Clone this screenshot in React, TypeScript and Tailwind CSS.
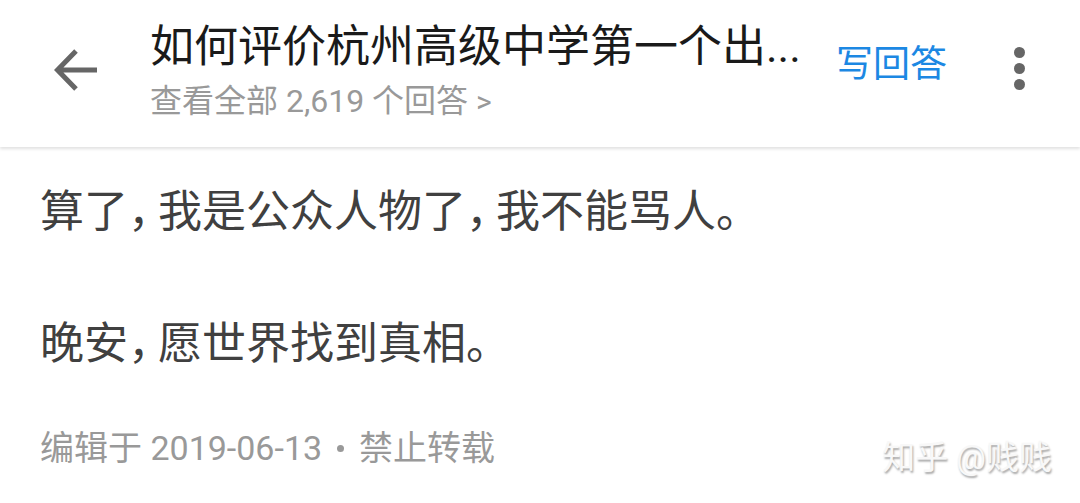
const cjk = "font-['Roboto','Noto_Sans_CJK_SC',sans-serif]";

function BackArrow() {
  return (
    <svg width="48" height="48" viewBox="0 0 48 48" fill="none">
      <path
        d="M44 24H5M23 5 4.5 24 23 43"
        stroke="#666"
        strokeWidth="5"
        strokeLinecap="butt"
        strokeLinejoin="miter"
      />
    </svg>
  );
}

// full-width comma with a narrower advance
function Comma() {
  return <span className="tracking-[-14px]">，</span>;
}

function MoreDots() {
  return (
    <div className="flex flex-col items-center gap-[5px]">
      <span className="h-[11px] w-[11px] rounded-full bg-[#666]" />
      <span className="h-[11px] w-[11px] rounded-full bg-[#666]" />
      <span className="h-[11px] w-[11px] rounded-full bg-[#666]" />
    </div>
  );
}

export default function App() {
  return (
    <div className={`relative h-[503px] w-[1080px] overflow-hidden bg-white ${cjk}`}>
      <header className="relative z-10 flex h-[147px] items-start bg-white shadow-[0_2px_3px_rgba(0,0,0,0.12)]">
        <div className="flex w-[150px] justify-start pl-[53px] pt-[46px]">
          <BackArrow />
        </div>
        <div className="flex-1 pt-[22px]">
          <h1 className="whitespace-nowrap text-[44px] leading-[50px] text-[#1a1a1a]">
            如何评价杭州高级中学第一个出...
          </h1>
          <p className="mt-[9px] text-[32px] leading-[40px] text-[#999]">
            查看全部 2,619 个回答 <span className="text-[30px]">&gt;</span>
          </p>
        </div>
        <button className="mt-[40px] text-[37px] leading-[50px] text-[#1c88e3]">
          写回答
        </button>
        <div className="ml-[67px] mr-[55px] mt-[47px]">
          <MoreDots />
        </div>
      </header>

      <main className="px-[40px] pt-[37px] text-[44px] leading-[56px] text-[#404040]">
        <p>
          算了<Comma />我是公众人物了<Comma />我不能骂人。
        </p>
        <p className="mt-[76px]">
          晚安<Comma />愿世界找到真相。
        </p>
        <div className="mt-[52px] flex h-[48px] items-center justify-between">
          <p className="flex items-center text-[34px] leading-[48px] text-[#999]">
            编辑于 2019-06-13
            <span className="mx-[15px] inline-block h-[7px] w-[7px] rounded-full bg-[#999]" />
            禁止转载
          </p>
          <span className="-mr-[12px] mt-[20px] whitespace-nowrap text-[33px] leading-[40px] text-[#f8f8f8] [text-shadow:1px_2px_2px_rgba(0,0,0,0.35)]">
            知乎 @贱贱
          </span>
        </div>
      </main>
    </div>
  );
}
